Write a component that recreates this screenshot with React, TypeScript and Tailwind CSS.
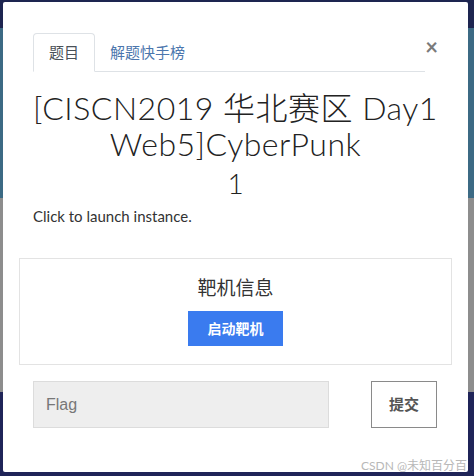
export default function App() {
  return (
    <div className="relative h-[476px] w-[474px] overflow-hidden bg-[linear-gradient(to_bottom,#1d2550_0px,#1d2550_28px,#3c6a84_28px,#3c6a84_198px,#8d8d8d_198px,#8d8d8d_392px,#1f2458_392px)] pl-[3px] pt-[2px] font-['Lato','Noto_Sans_CJK_SC',sans-serif]">
      <div className="flex h-[470px] w-[465px] flex-col rounded-[2px] bg-white">
        <div className="flex items-start pl-[30px] pr-[30px] pt-[31px]">
          <ul className="flex w-[392px] border-b border-[#dee2e6]">
            <li className="-mb-px rounded-t-[4px] border border-[#dee2e6] border-b-white bg-white px-[15px] py-[7px] text-[15px] leading-[22px] text-[#495057]">
              题目
            </li>
            <li className="px-[15px] py-[8px] text-[15px] leading-[22px] text-[#4b76ad]">
              解题快手榜
            </li>
          </ul>
          <button className="ml-auto mt-[3px] text-[22px] font-bold leading-none text-[#7a7a7a]">
            ×
          </button>
        </div>

        <h3 className="mt-[18px] px-[20px] text-center text-[32px] font-light leading-[36px] tracking-[0.5px] text-[#222]">
          [CISCN2019 华北赛区 Day1 Web5]CyberPunk
        </h3>
        <div className="mt-[3px] text-center text-[28px] font-light leading-[36px] text-[#222]">1</div>
        <p className="mt-[4px] px-[30px] text-[15px] leading-[22px] text-[#333]">
          Click to launch instance.
        </p>

        <div className="mx-[16px] mt-[31px] flex flex-col items-center border border-[#e3e3e3] pb-[18px] pt-[15px]">
          <div className="text-[19px] leading-[28px] text-[#333]">靶机信息</div>
          <button className="mt-[9px] h-[35px] w-[95px] bg-[#3a7bef] text-[14px] font-bold text-white">
            启动靶机
          </button>
        </div>

        <div className="mt-[16px] flex items-center pl-[30px] pr-[31px]">
          <input
            placeholder="Flag"
            className="h-[47px] w-[296px] border border-[#dcdcdc] bg-[#eeeeee] px-[12px] font-['Liberation_Sans',sans-serif] text-[16px] text-[#555] outline-none placeholder:text-[#777]"
          />
          <button className="ml-auto h-[47px] w-[66px] border border-[#8a8a8a] bg-white text-[15px] font-bold text-[#555]">
            提交
          </button>
        </div>
      </div>
      <div className="absolute bottom-[3px] right-[7px] text-[12px] leading-[14px] text-[#b8b8b8]">
        CSDN @未知百分百
      </div>
    </div>
  );
}
